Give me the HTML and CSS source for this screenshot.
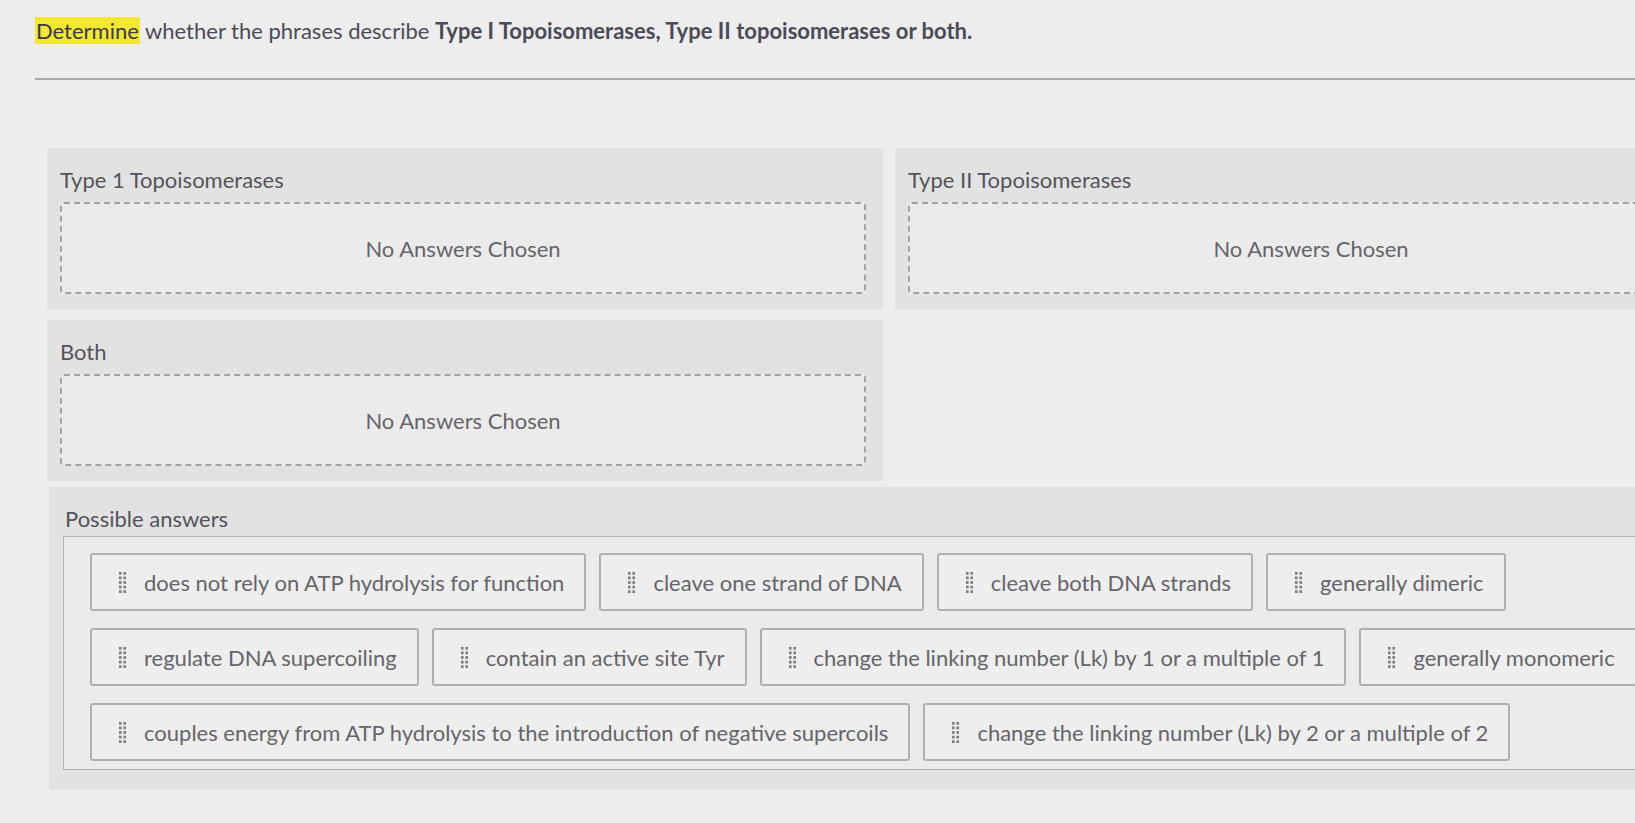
FILE: index.html
```html
<!DOCTYPE html>
<html lang="en">
<head>
  <meta charset="UTF-8">
  <meta name="viewport" content="width=device-width, initial-scale=1.0">
  <title>Topoisomerases</title>
  <link rel="stylesheet" href="styles.css">
</head>
<body>
  <div class="page">
    <div class="question">
      <p><mark>Determine</mark> whether the phrases describe <b>Type I Topoisomerases, Type II topoisomerases or both.</b></p>
    </div>

    <div class="groups">
      <div class="group">
        <div class="group-title">Type 1 Topoisomerases</div>
        <div class="dropzone">No Answers Chosen</div>
      </div>
      <div class="group">
        <div class="group-title">Type II Topoisomerases</div>
        <div class="dropzone">No Answers Chosen</div>
      </div>
      <div class="group">
        <div class="group-title">Both</div>
        <div class="dropzone">No Answers Chosen</div>
      </div>
    </div>

    <div class="answers">
      <div class="group-title">Possible answers</div>
      <div class="answer-pool">
        <div class="chip-row">
          <div class="chip"><span class="handle"></span>does not rely on ATP hydrolysis for function</div>
          <div class="chip"><span class="handle"></span>cleave one strand of DNA</div>
          <div class="chip"><span class="handle"></span>cleave both DNA strands</div>
          <div class="chip"><span class="handle"></span>generally dimeric</div>
        </div>
        <div class="chip-row">
          <div class="chip"><span class="handle"></span>regulate DNA supercoiling</div>
          <div class="chip"><span class="handle"></span>contain an active site Tyr</div>
          <div class="chip"><span class="handle"></span>change the linking number (Lk) by 1 or a multiple of 1</div>
          <div class="chip"><span class="handle"></span>generally monomeric</div>
        </div>
        <div class="chip-row">
          <div class="chip"><span class="handle"></span>couples energy from ATP hydrolysis to the introduction of negative supercoils</div>
          <div class="chip"><span class="handle"></span>change the linking number (Lk) by 2 or a multiple of 2</div>
        </div>
      </div>
    </div>
  </div>
</body>
</html>
```

FILE: styles.css
```css
:root {
  --page: #ededed;
  --panel: #e2e2e2;
  --zone: #ebebeb;
  --text: #55535c;
  --muted: #66646b;
  --line: #a3a3a3;
}
*, *::before, *::after { box-sizing: border-box; margin: 0; padding: 0; }
html, body { overflow: hidden; }
body {
  background: var(--page);
  font-family: Lato, "Open Sans", sans-serif;
  color: var(--text);
  width: 1635px;
  height: 823px;
}

.page { width: 1720px; }

/* question header */
.question {
  margin-left: 35px;
  padding: 18px 0 34px;
  border-bottom: 2px solid #a9a9ad;
  font-size: 22px;
  line-height: 26px;
  color: #4c4a58;
}
.question mark { background: #f2e733; color: #3d3b48; padding: 0 1px; }
.question b { font-weight: 700; }

/* drop groups */
.groups {
  display: grid;
  grid-template-columns: 836px 836px;
  gap: 11px 12px;
  margin: 68px 0 0 47px;
}
.group {
  background: var(--panel);
  padding: 19px 17px 15px 13px;
}
.group-title {
  font-size: 22px;
  line-height: 26px;
  color: var(--text);
  margin-bottom: 9px;
}
.dropzone {
  height: 92px;
  border: 2px dashed var(--line);
  border-radius: 4px;
  background: var(--zone);
  display: flex; align-items: center; justify-content: center;
  font-size: 22px;
  color: var(--muted);
}

/* possible answers */
.answers {
  margin: 6px 0 0 49px;
  background: var(--panel);
  padding: 19px 0 20px 14px;
}
.answers .group-title { padding-left: 2px; margin-bottom: 4px; }
.answer-pool {
  border: 1.5px solid #b3b3b3;
  background: #ebebeb;
  padding: 16px 26px 8px;
  display: flex; flex-direction: column; gap: 17px;
}
.chip-row { display: flex; gap: 13px; }
.chip {
  height: 58px;
  flex: none;
  display: flex; align-items: center; gap: 17px;
  padding: 0 20px 0 26px;
  border: 2px solid #b0b0b0;
  border-radius: 3px;
  background: #eeeeee;
  font-size: 22px;
  color: var(--muted);
  white-space: nowrap;
}
.handle {
  width: 9px; height: 23px;
  background-image: radial-gradient(circle, #7e7e84 1.3px, transparent 1.7px);
  background-size: 4.5px 4.6px;
  flex: none;
}
```
